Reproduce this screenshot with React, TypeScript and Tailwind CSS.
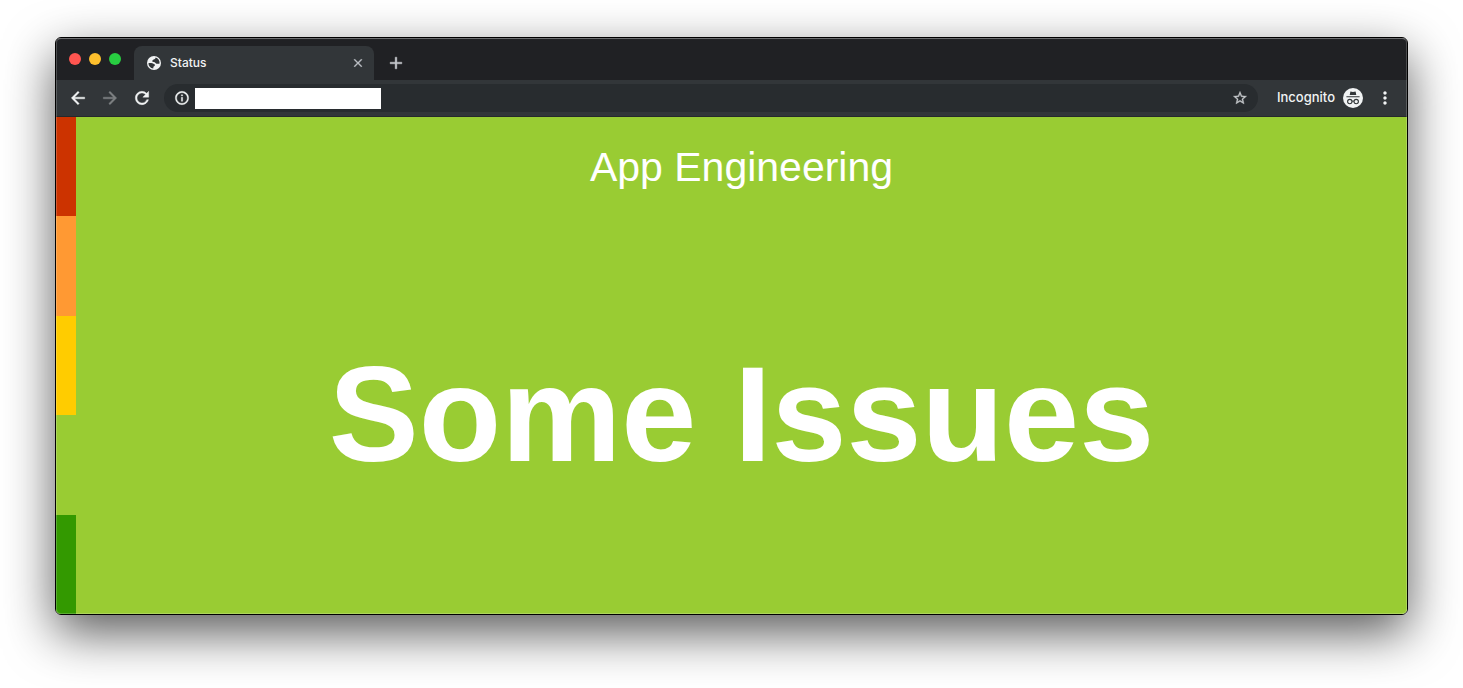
import { MdMoreVert } from "react-icons/md"

const lights = [
  { label: "Close window", color: "bg-[#ff5550]" },
  { label: "Minimize window", color: "bg-[#fdbf2d]" },
  { label: "Zoom window", color: "bg-[#28cd41]" },
]

const levels = [
  { name: "outage", color: "bg-[#cc3300]" },
  { name: "major", color: "bg-[#ff9933]" },
  { name: "degraded", color: "bg-[#ffcc00]" },
  { name: "some", color: "bg-[#99cc33]" },
  { name: "ok", color: "bg-[#339900]" },
]

// 24-unit filled glyphs with a slight outline so they hold up at small sizes
const icons = {
  back: "M20 11H7.83l5.59-5.59L12 4l-8 8 8 8 1.41-1.41L7.83 13H20v-2z",
  forward: "M12 4l-1.41 1.41L16.17 11H4v2h12.17l-5.58 5.59L12 20l8-8z",
  reload:
    "M17.65 6.35A7.958 7.958 0 0 0 12 4c-4.42 0-7.99 3.58-7.99 8s3.57 8 7.99 8c3.73 0 6.84-2.55 7.73-6h-2.08A5.99 5.99 0 0 1 12 18c-3.31 0-6-2.69-6-6s2.69-6 6-6c1.66 0 3.14.69 4.22 1.78L13 11h7V4l-2.35 2.35z",
  close: "M19 6.41L17.59 5 12 10.59 6.41 5 5 6.41 10.59 12 5 17.59 6.41 19 12 13.41 17.59 19 19 17.59 13.41 12z",
  add: "M19 13h-6v6h-2v-6H5v-2h6V5h2v6h6v2z",
  info: "M11 7h2v2h-2zm0 4h2v6h-2zm1-9C6.48 2 2 6.48 2 12s4.48 10 10 10 10-4.48 10-10S17.52 2 12 2zm0 18c-4.41 0-8-3.59-8-8s3.59-8 8-8 8 3.59 8 8-3.59 8-8 8z",
  star: "M22 9.24l-7.19-.62L12 2 9.19 8.63 2 9.24l5.46 4.73L5.82 21 12 17.27 18.18 21l-1.63-7.03L22 9.24zM12 15.4l-3.76 2.27 1-4.28-3.32-2.88 4.38-.38L12 6.1l1.71 4.04 4.38.38-3.32 2.88 1 4.28L12 15.4z",
}

function Icon({ name, size }: { name: keyof typeof icons; size: number }) {
  return (
    <svg
      viewBox="0 0 24 24"
      width={size}
      height={size}
      fill="currentColor"
      stroke="currentColor"
      strokeWidth="0.5"
      aria-hidden="true"
    >
      <path d={icons[name]} />
    </svg>
  )
}

function GlobeIcon() {
  return (
    <svg viewBox="0 0 16 16" className="h-4 w-4" aria-hidden="true">
      <circle cx="8" cy="8" r="7" fill="#f1f3f4" />
      <path
        d="M2.4 8.2 C4 7.7 6.6 7.9 7.8 9 C8.8 9.2 9.2 9.9 8.8 10.6 C8.5 11.4 7.6 11.2 7.4 12.2 L7.2 13.6 C4.4 13.2 2.5 11 2.4 8.2 Z M9.6 2.6 C9.5 3.8 8.8 4.3 7.6 4.4 C7 4.5 7.1 5.2 6.4 5.6 C5.8 6.2 6.4 7.1 7.8 7 C9.2 7 9.4 8.4 10.4 8.7 C11.6 9 12.6 8.8 13.6 8.4 C13.8 5.6 12 3.3 9.6 2.6 Z"
        fill="#323639"
      />
    </svg>
  )
}

function IncognitoIcon() {
  return (
    <svg viewBox="0 0 20 20" className="h-5 w-5" aria-hidden="true">
      <circle cx="10" cy="10" r="10" fill="#f1f3f4" />
      <path d="M7.4 3.6 L10 4.1 L12.6 3.6 L13.3 7.1 H6.7 Z M3.4 8.2 h13.2 v1.1 h-13.2 Z" fill="#323639" />
      <g fill="none" stroke="#323639" strokeWidth="1.1">
        <circle cx="6.8" cy="13.6" r="2.2" />
        <circle cx="13.2" cy="13.6" r="2.2" />
        <path d="M9 13.4 Q10 12.7 11 13.4" />
      </g>
    </svg>
  )
}

function TabStrip() {
  return (
    <div className="flex h-[41px] items-end bg-[#202124]">
      <div className="flex h-full w-[78px] shrink-0 items-center gap-2 pb-0.5 pl-[13px]">
        {lights.map((light) => (
          <button key={light.label} aria-label={light.label} className={`h-3 w-3 rounded-full ${light.color}`} />
        ))}
      </div>
      <div className="flex h-[34px] w-60 items-center rounded-t-lg bg-[#323639] pl-3 pr-[9px]">
        <GlobeIcon />
        <span className="ml-2 flex-1 text-xs font-medium text-[#f1f3f4]">Status</span>
        <button aria-label="Close tab" className="text-[#bdc1c6]">
          <Icon name="close" size={14} />
        </button>
      </div>
      <button aria-label="New tab" className="ml-3 flex h-[34px] items-center text-[#c9ccd0]">
        <Icon name="add" size={20} />
      </button>
    </div>
  )
}

function Toolbar() {
  return (
    <div className="flex h-[37px] items-center border-b border-[#26292b] bg-[#323639] px-3 text-[#f1f3f4]">
      <div className="flex gap-3">
        <button aria-label="Back">
          <Icon name="back" size={20} />
        </button>
        <button aria-label="Forward" className="text-[#7d8082]">
          <Icon name="forward" size={20} />
        </button>
        <button aria-label="Reload">
          <Icon name="reload" size={20} />
        </button>
      </div>
      <div className="ml-3 flex h-7 flex-1 items-center rounded-full bg-[#282c2f] px-[10px]">
        <Icon name="info" size={16} />
        <input aria-label="Address" className="ml-[5px] h-[21px] w-[186px] bg-white px-1 text-xs text-black outline-none" />
        <button aria-label="Bookmark this page" className="ml-auto text-[#c4c7ca]">
          <Icon name="star" size={16} />
        </button>
      </div>
      <span className="ml-[19px] text-[13px] font-medium">Incognito</span>
      <span className="ml-2">
        <IncognitoIcon />
      </span>
      <button aria-label="Menu" className="ml-3">
        <MdMoreVert size={20} />
      </button>
    </div>
  )
}

export default function App() {
  return (
    <div className="flex min-h-screen flex-col bg-white px-[55px] pt-[37px] pb-[73px] font-['Inter',sans-serif]">
      <div className="relative flex flex-1 flex-col overflow-hidden rounded-md border border-black shadow-[0_18px_50px_rgba(0,0,0,0.65)]">
        <header className="bg-[#202124] pt-px">
          <TabStrip />
          <Toolbar />
        </header>
        <main className="flex flex-1 bg-[#99cc33] font-['Liberation_Sans',sans-serif] text-white">
          <div className="flex w-5 flex-col">
            {levels.map((level) => (
              <div key={level.name} className={`flex-1 ${level.color}`} />
            ))}
          </div>
          <div className="flex flex-1 flex-col text-center">
            <h2 className="pt-[26px] text-[41px] leading-12">App Engineering</h2>
            <div className="flex flex-1 items-center justify-center pt-6">
              <h1 className="text-[135px] leading-none font-bold">Some Issues</h1>
            </div>
          </div>
        </main>
        {/* light rim just inside the window edge */}
        <div className="pointer-events-none absolute inset-0 rounded-[5px] border border-white/20 border-t-white/35" />
      </div>
    </div>
  )
}
